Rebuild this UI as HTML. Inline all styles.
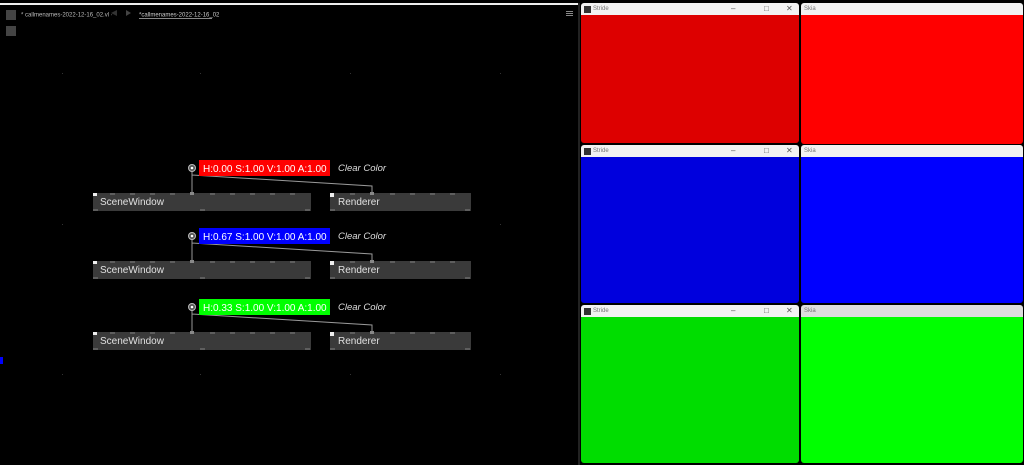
<!DOCTYPE html>
<html><head><meta charset="utf-8"><style>
html,body{margin:0;padding:0;width:1024px;height:465px;background:#000;overflow:hidden;font-family:"Liberation Sans",sans-serif}
.w{position:absolute;overflow:hidden;border-radius:3px}
.t{position:absolute;left:0;right:0;top:0;height:12px;background:#f2f2f2;font-size:6px;color:#777;line-height:12px}
.t span{position:absolute;left:12px}
.t i{position:absolute;left:3px;top:3px;width:7px;height:7px;background:#333}
.t b{position:absolute;top:0;font-weight:normal;color:#555;font-size:8px}
.c{position:absolute;left:0;right:0;top:12px;bottom:0}
</style></head><body>
<svg width="580" height="465" style="position:absolute;left:0;top:0" font-family="Liberation Sans, DejaVu Sans, sans-serif">
<rect x="0" y="0" width="580" height="465" fill="#000"/>
<rect x="0" y="3" width="578" height="2" fill="#eee"/>
<rect x="578" y="3" width="2" height="462" fill="#222"/>
<rect x="6" y="10" width="10" height="10" fill="#444"/>
<rect x="6" y="26" width="10" height="10" fill="#444"/>
<text x="21" y="16.5" font-size="6" fill="#bbb">* callmenames-2022-12-16_02.vl  ·</text>
<path d="M111 13 L117 10 L117 16Z" fill="#333"/><path d="M126 10 L131 13 L126 16Z" fill="#444"/>
<text x="139" y="16.5" font-size="6" fill="#ccc">*callmenames-2022-12-16_02</text>
<rect x="139" y="18" width="73" height="1" fill="#888"/>
<rect x="566" y="11" width="7" height="1" fill="#888"/><rect x="566" y="13" width="7" height="1" fill="#888"/><rect x="566" y="15" width="7" height="1" fill="#888"/>
<rect x="0" y="357" width="3" height="7" fill="#00f"/>
<g fill="#333">
<rect x="62" y="73" width="1" height="1"/><rect x="62" y="224" width="1" height="1"/><rect x="62" y="374" width="1" height="1"/>
<rect x="200" y="73" width="1" height="1"/><rect x="350" y="73" width="1" height="1"/><rect x="500" y="73" width="1" height="1"/>
<rect x="500" y="224" width="1" height="1"/><rect x="500" y="374" width="1" height="1"/><rect x="200" y="374" width="1" height="1"/><rect x="350" y="374" width="1" height="1"/>
</g>
<g id="r1">
<rect x="93" y="193" width="218" height="18" fill="#3a3a3a"/>
<rect x="330" y="193" width="141" height="18" fill="#3a3a3a"/>
<g fill="#5e5e5e"><rect x="110" y="193" width="5" height="2"/><rect x="130" y="193" width="5" height="2"/><rect x="150" y="193" width="5" height="2"/><rect x="170" y="193" width="5" height="2"/><rect x="210" y="193" width="5" height="2"/><rect x="230" y="193" width="5" height="2"/><rect x="250" y="193" width="5" height="2"/><rect x="270" y="193" width="5" height="2"/><rect x="290" y="193" width="5" height="2"/>
<rect x="93" y="209" width="5" height="2"/><rect x="200" y="209" width="5" height="2"/><rect x="305" y="209" width="5" height="2"/>
<rect x="350" y="193" width="5" height="2"/><rect x="390" y="193" width="5" height="2"/><rect x="410" y="193" width="5" height="2"/><rect x="430" y="193" width="5" height="2"/><rect x="450" y="193" width="5" height="2"/><rect x="330" y="209" width="5" height="2"/><rect x="465" y="209" width="5" height="2"/></g>
<rect x="93" y="193" width="4" height="3" fill="#eee"/>
<rect x="330" y="193" width="4" height="4" fill="#eee"/>
<text x="100" y="205" font-size="10" fill="#e0e0e0">SceneWindow</text>
<text x="338" y="205" font-size="10" fill="#e0e0e0">Renderer</text>
<path d="M192 170 V193 M192 175 L372 186 V193" stroke="#999" stroke-width="1" fill="none"/>
<rect x="190" y="192" width="4" height="3" fill="#888"/><rect x="370" y="192" width="4" height="3" fill="#888"/>
<circle cx="192" cy="168" r="3.5" fill="#555" stroke="#bbb" stroke-width="1"/><circle cx="192" cy="168" r="1.3" fill="#fff"/>
</g>
<rect x="199" y="160" width="131" height="16" fill="#f00"/>
<text x="203" y="172" font-size="10" fill="#fff">H:0.00 S:1.00 V:1.00 A:1.00</text>
<text x="338" y="171" font-size="9.5" font-style="italic" fill="#ddd">Clear Color</text>
<use href="#r1" y="68"/>
<rect x="199" y="228" width="131" height="16" fill="#00f"/>
<text x="203" y="240" font-size="10" fill="#fff">H:0.67 S:1.00 V:1.00 A:1.00</text>
<text x="338" y="239" font-size="9.5" font-style="italic" fill="#ddd">Clear Color</text>
<use href="#r1" y="139"/>
<rect x="199" y="299" width="131" height="16" fill="#0f0"/>
<text x="203" y="311" font-size="10" fill="#fff">H:0.33 S:1.00 V:1.00 A:1.00</text>
<text x="338" y="310" font-size="9.5" font-style="italic" fill="#ddd">Clear Color</text>
</svg>

<div class="w" style="left:581px;top:3px;width:218px;height:140px"><div class="t"><i></i><span>Stride</span><b style="left:150px">–</b><b style="left:183px">□</b><b style="left:205px">✕</b></div><div class="c" style="background:#dd0000"></div></div>
<div class="w" style="left:801px;top:3px;width:222px;height:141px"><div class="t"><span style="left:3px">Skia</span></div><div class="c" style="background:#f00"></div></div>

<div class="w" style="left:581px;top:145px;width:218px;height:158px"><div class="t"><i></i><span>Stride</span><b style="left:150px">–</b><b style="left:183px">□</b><b style="left:205px">✕</b></div><div class="c" style="background:#0000dd"></div></div>
<div class="w" style="left:801px;top:145px;width:222px;height:158px"><div class="t"><span style="left:3px">Skia</span></div><div class="c" style="background:#00f"></div></div>

<div class="w" style="left:581px;top:305px;width:218px;height:158px"><div class="t"><i></i><span>Stride</span><b style="left:150px">–</b><b style="left:183px">□</b><b style="left:205px">✕</b></div><div class="c" style="background:#00dd00"></div></div>
<div class="w" style="left:801px;top:305px;width:222px;height:158px"><div class="t" style="background:#ddd"><span style="left:3px">Skia</span></div><div class="c" style="background:#0f0"></div></div>
</body></html>
